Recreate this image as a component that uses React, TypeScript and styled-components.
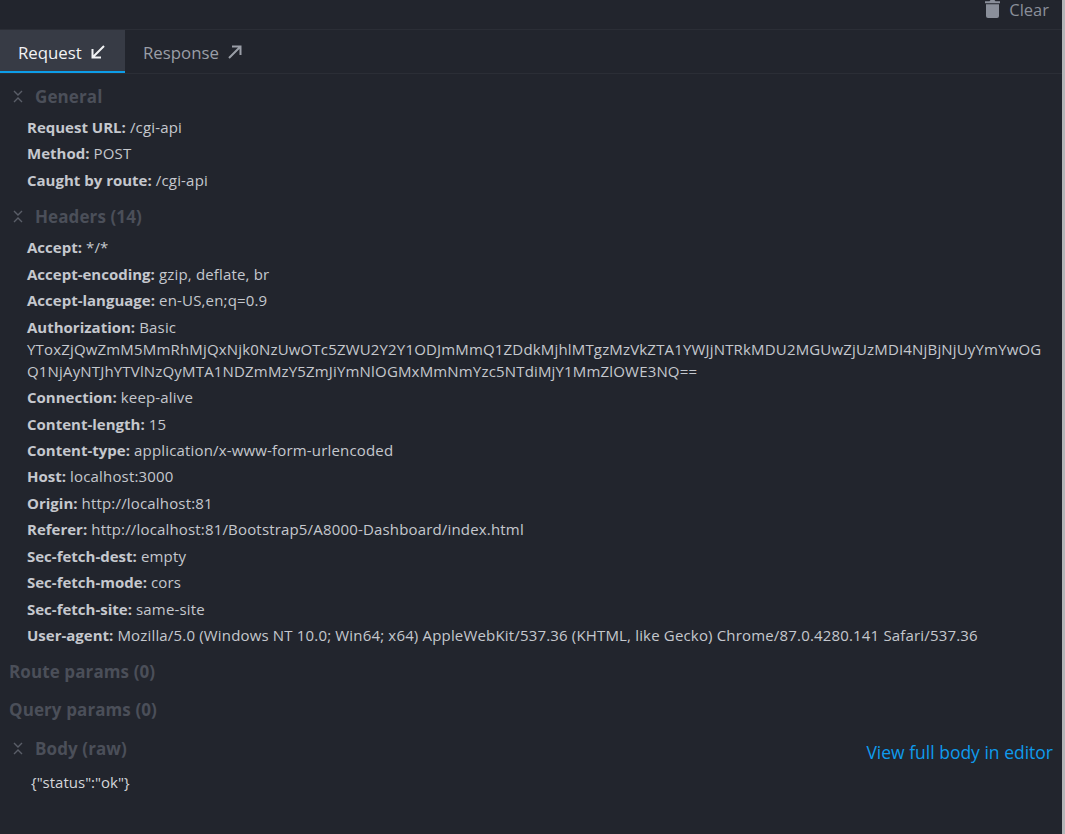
import { createGlobalStyle, styled } from 'styled-components';

const FONT = `"Open Sans", "Noto Sans", sans-serif`;

const GlobalStyle = createGlobalStyle`
  html, body {
    margin: 0;
    padding: 0;
    background: #22252d;
  }
`;

const GENERAL = [
  ['Request URL', '/cgi-api'],
  ['Method', 'POST'],
  ['Caught by route', '/cgi-api'],
];

const HEADERS_TOP = [
  ['Accept', '*/*'],
  ['Accept-encoding', 'gzip, deflate, br'],
  ['Accept-language', 'en-US,en;q=0.9'],
];

const TOKEN_LINES = [
  'YToxZjQwZmM5MmRhMjQxNjk0NzUwOTc5ZWU2Y2Y1ODJmMmQ1ZDdkMjhlMTgzMzVkZTA1YWJjNTRkMDU2MGUwZjUzMDI4NjBjNjUyYmYwOG',
  'Q1NjAyNTJhYTVlNzQyMTA1NDZmMzY5ZmJiYmNlOGMxMmNmYzc5NTdiMjY1MmZlOWE3NQ==',
];

const HEADERS_BOTTOM = [
  ['Connection', 'keep-alive'],
  ['Content-length', '15'],
  ['Content-type', 'application/x-www-form-urlencoded'],
  ['Host', 'localhost:3000'],
  ['Origin', 'http://localhost:81'],
  ['Referer', 'http://localhost:81/Bootstrap5/A8000-Dashboard/index.html'],
  ['Sec-fetch-dest', 'empty'],
  ['Sec-fetch-mode', 'cors'],
  ['Sec-fetch-site', 'same-site'],
  ['User-agent', 'Mozilla/5.0 (Windows NT 10.0; Win64; x64) AppleWebKit/537.36 (KHTML, like Gecko) Chrome/87.0.4280.141 Safari/537.36'],
];

function CollapseIcon() {
  return (
    <StyledIcon width="10" height="13" viewBox="0 0 10 13" fill="none" stroke="currentColor" strokeWidth="1.4">
      <path d="M1 1l4 4 4-4" />
      <path d="M1 12l4-4 4 4" />
    </StyledIcon>
  );
}

function Row({ name, value }: { name: string; value: string }) {
  return (
    <StyledRow>
      <b>{name}:</b> {value}
    </StyledRow>
  );
}

function App() {
  return (
    <StyledPage>
      <GlobalStyle />
      <StyledTopBar>
        <StyledClear>
          <svg width="15" height="18" viewBox="0 0 15 18" fill="currentColor">
            <path d="M0 1.200h4.500L5.500 0h4l1 1.200H15v2H0z" />
            <path d="M1 4.200h13V16a2 2 0 0 1-2 2H3a2 2 0 0 1-2-2z" />
          </svg>
          Clear
        </StyledClear>
      </StyledTopBar>
      <StyledTabs>
        <StyledTab $active>
          Request
          <svg width="16" height="16" viewBox="0 0 16 16" fill="none" stroke="currentColor" strokeWidth="2">
            <path d="M14 2L3 13M2.500 5v8.500H11" />
          </svg>
        </StyledTab>
        <StyledTab>
          Response
          <svg width="16" height="16" viewBox="0 0 16 16" fill="none" stroke="currentColor" strokeWidth="2">
            <path d="M2 14L13 3M5 2.500h8.500V11" />
          </svg>
        </StyledTab>
      </StyledTabs>
      <StyledContent>
        <StyledHeading>
          <CollapseIcon />
          General
        </StyledHeading>
        <StyledRows>
          {GENERAL.map(([name, value]) => (
            <Row key={name} name={name} value={value} />
          ))}
        </StyledRows>
        <StyledHeading>
          <CollapseIcon />
          Headers (14)
        </StyledHeading>
        <StyledRows>
          {HEADERS_TOP.map(([name, value]) => (
            <Row key={name} name={name} value={value} />
          ))}
          <StyledRow>
            <b>Authorization:</b> Basic
            {TOKEN_LINES.map((line) => (
              <StyledTokenLine key={line}>{line}</StyledTokenLine>
            ))}
          </StyledRow>
          {HEADERS_BOTTOM.map(([name, value]) => (
            <Row key={name} name={name} value={value} />
          ))}
        </StyledRows>
        <StyledPlainHeading>Route params (0)</StyledPlainHeading>
        <StyledPlainHeading>Query params (0)</StyledPlainHeading>
        <StyledBodyHeader>
          <StyledHeading>
            <CollapseIcon />
            Body (raw)
          </StyledHeading>
          <StyledLink>View full body in editor</StyledLink>
        </StyledBodyHeader>
        <StyledBody>{'{"status":"ok"}'}</StyledBody>
      </StyledContent>
    </StyledPage>
  );
}

export default App;

const StyledPage = styled.div`
  width: 1065px;
  height: 834px;
  overflow: hidden;
  box-sizing: border-box;
  background: #22252d;
  border-right: 3px solid #b4b6b8;
  font-family: ${FONT};
  font-size: 15px;
  letter-spacing: 0.17px;
  color: #c5c8ce;
`;

const StyledTopBar = styled.div`
  display: flex;
  justify-content: flex-end;
  align-items: flex-start;
  height: 29px;
  padding-right: 13px;
  border-bottom: 1px solid #2b2e36;
`;

const StyledClear = styled.div`
  display: flex;
  align-items: flex-start;
  gap: 9px;
  height: 20px;
  line-height: 20px;
  font-size: 16.500px;
  letter-spacing: 0;
  color: #8a8f9a;
`;

const StyledTabs = styled.div`
  display: flex;
  height: 43px;
  border-bottom: 1px solid #2b2e36;
`;

const StyledTab = styled.div<{ $active?: boolean }>`
  display: flex;
  align-items: center;
  gap: 8px;
  width: 125px;
  box-sizing: border-box;
  padding: 3px 0 0 18px;
  font-size: 16.800px;
  letter-spacing: 0;
  color: ${({ $active }) => ($active ? '#f2f3f5' : '#9a9ea7')};
  background: ${({ $active }) => ($active ? '#373b45' : 'transparent')};
  border-bottom: 2px solid ${({ $active }) => ($active ? '#0d9de8' : 'transparent')};
`;

const StyledContent = styled.div`
  padding-top: 10px;
`;

const StyledHeading = styled.div`
  display: flex;
  align-items: center;
  gap: 12px;
  height: 24px;
  padding-left: 13px;
  font-size: 17px;
  font-weight: 700;
  letter-spacing: 0.1px;
  color: #4b4f59;
`;

const StyledIcon = styled.svg`
  color: #5a5e68;
`;

const StyledPlainHeading = styled.div`
  height: 24px;
  line-height: 24px;
  margin-bottom: 14.500px;
  padding-left: 9px;
  font-size: 17px;
  font-weight: 700;
  letter-spacing: 0.1px;
  color: #4b4f59;
`;

const StyledRows = styled.div`
  display: flex;
  flex-direction: column;
  gap: 4.450px;
  padding: 8px 0 13.500px 27px;
`;

const StyledRow = styled.div`
  line-height: 22px;
  b {
    font-weight: 700;
    letter-spacing: 0;
  }
`;

const StyledTokenLine = styled.div`
  white-space: nowrap;
`;

const StyledBodyHeader = styled.div`
  display: flex;
  justify-content: space-between;
  align-items: flex-start;
  padding-right: 9px;
`;

const StyledLink = styled.a`
  margin-top: 3px;
  font-size: 17.500px;
  letter-spacing: 0;
  color: #0f9bec;
`;

const StyledBody = styled.div`
  padding: 7px 0 0 31px;
  line-height: 22px;
  letter-spacing: 0;
  color: #d4d6da;
`;
